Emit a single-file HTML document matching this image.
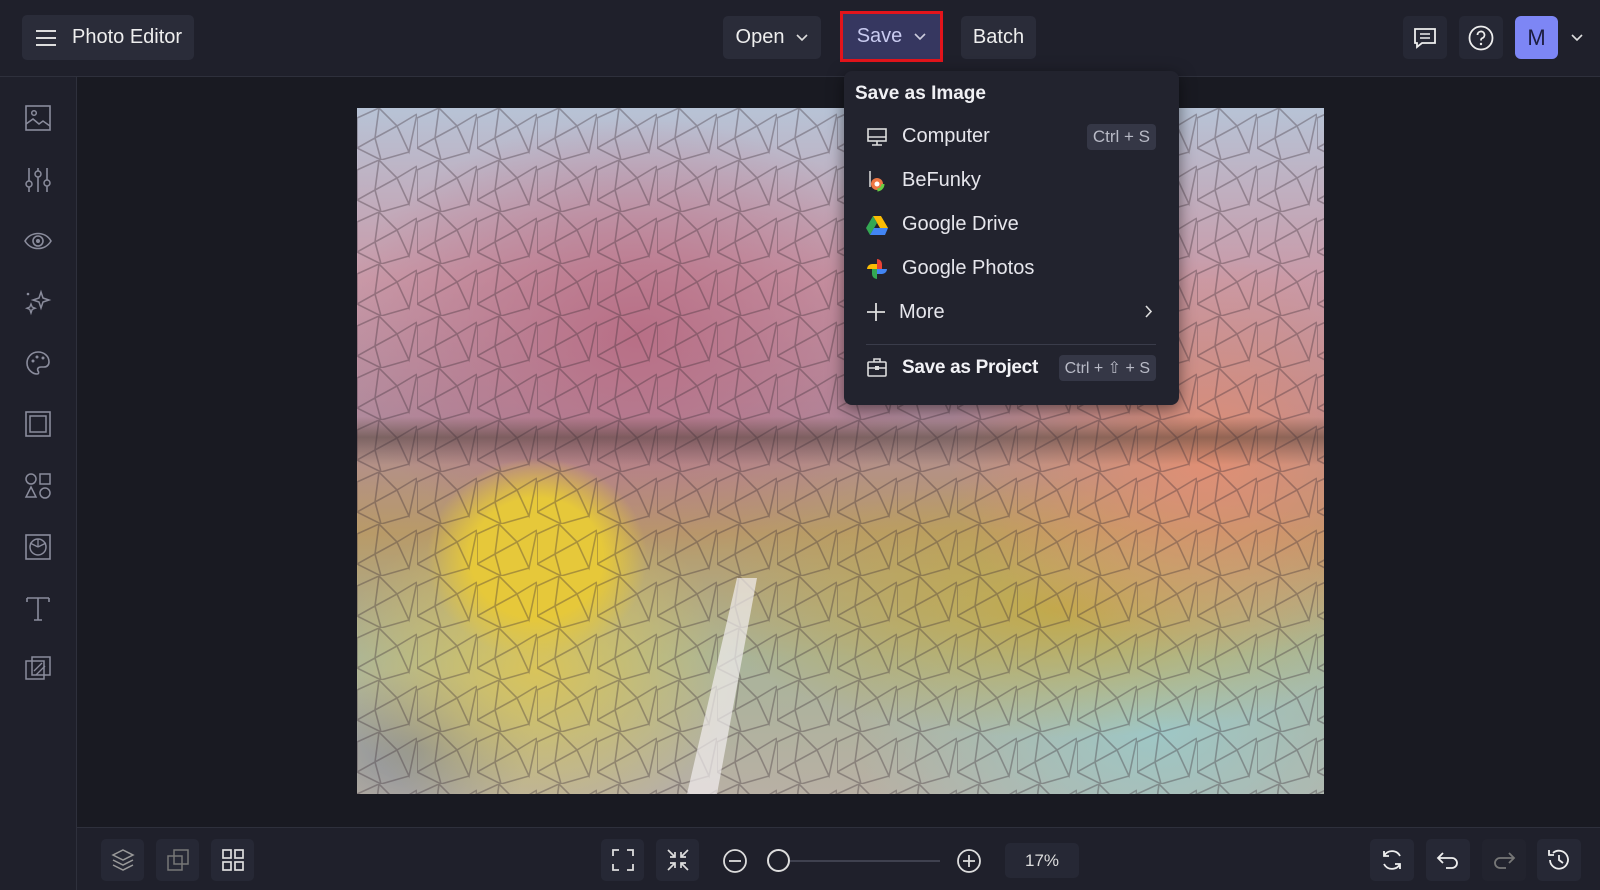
<!DOCTYPE html>
<html><head><meta charset="utf-8"><style>
*{box-sizing:border-box;margin:0;padding:0}
body{width:1600px;height:890px;background:#191a22;font-family:"Liberation Sans",sans-serif;color:#e8e8ee;position:relative;overflow:hidden}
.abs{position:absolute}
.hdr{left:0;top:0;width:1600px;height:77px;background:#1f202b;border-bottom:1px solid #2e303c}
.side{left:0;top:77px;width:77px;height:813px;background:#1f202b;border-right:1px solid #2e303c}
.bot{left:77px;top:827px;width:1523px;height:63px;background:#1f202b;border-top:1px solid #2e303c}
.btn{background:#2a2c39;border-radius:5px;display:flex;align-items:center;justify-content:center;font-size:20px;color:#eee}
.ib{background:#262835;border-radius:5px;width:42px;height:42px;display:flex;align-items:center;justify-content:center}
svg{display:block}
.menu{left:844px;top:71px;width:335px;height:334px;background:#22232e;border-radius:8px;box-shadow:0 4px 16px rgba(0,0,0,.5)}
.mi{position:absolute;left:58px;font-size:20px;color:#e6e6ec}
.kb{position:absolute;right:23px;background:#353746;color:#b8bac6;font-size:17px;padding:3px 6px;border-radius:4px}
.pic{left:357px;top:108px;width:967px;height:686px;background:
linear-gradient(180deg,rgba(0,0,0,0) 0%,rgba(0,0,0,0) 45%,rgba(60,50,40,.45) 48%,rgba(0,0,0,0) 52%),
radial-gradient(ellipse 110px 100px at 180px 450px,#e6c83a 0%,#e6c83a 60%,rgba(230,200,58,0) 100%),
radial-gradient(ellipse 200px 160px at 180px 560px,#d9c45a 0%,rgba(217,196,90,0) 100%),
radial-gradient(ellipse 300px 220px at 280px 230px,#b86f86 0%,rgba(184,111,134,0) 100%),
radial-gradient(ellipse 260px 200px at 850px 350px,#e08f74 0%,rgba(224,143,116,0) 100%),
radial-gradient(ellipse 350px 130px at 700px 500px,#c2a94a 0%,rgba(194,169,74,0) 100%),
radial-gradient(ellipse 300px 200px at 800px 620px,#9ec7c6 0%,rgba(158,199,198,0) 100%),
radial-gradient(ellipse 120px 80px at 60px 640px,#8a8e98 0%,rgba(138,142,152,0) 100%),
linear-gradient(180deg,#b7c3d6 0%,#c99aa8 25%,#b08a9c 45%,#b89a68 62%,#a9b49a 80%,#b8b0a4 100%);overflow:hidden}
</style></head><body>
<div class="abs hdr"></div>
<div class="abs side"></div>
<div class="abs bot"></div>

<div class="abs btn" style="left:22px;top:15px;width:172px;height:45px;justify-content:flex-start;padding-left:12px">
<svg width="24" height="20" viewBox="0 0 24 20"><path d="M2 3h20M2 10h20M2 17h20" stroke="#ddd" stroke-width="2"/></svg>
<span style="margin-left:14px">Photo Editor</span></div>
<div class="abs btn" style="left:723px;top:16px;width:98px;height:43px">Open<svg style="margin-left:12px" width="12" height="8"><path d="M1 1l5 5 5-5" stroke="#ddd" fill="none" stroke-width="1.6"/></svg></div>
<div class="abs" style="left:840px;top:11px;width:103px;height:51px;border:3px solid #e3141b;background:#363760;display:flex;align-items:center;justify-content:center;font-size:20px;color:#c9cbf0">Save<svg style="margin-left:12px" width="12" height="8"><path d="M1 1l5 5 5-5" stroke="#ccd" fill="none" stroke-width="1.6"/></svg></div>
<div class="abs btn" style="left:961px;top:16px;width:75px;height:43px">Batch</div>

<div class="abs ib" style="left:1403px;top:16px;width:44px;height:43px"><svg width="26" height="24"><path d="M3 3h20v14H10l-5 4v-4H3z" stroke="#eee" fill="none" stroke-width="1.8"/><path d="M8 8h10M8 12h10" stroke="#eee" stroke-width="1.6"/></svg></div>
<div class="abs ib" style="left:1459px;top:16px;width:44px;height:43px"><svg width="28" height="28"><circle cx="14" cy="14" r="11.5" stroke="#eee" fill="none" stroke-width="1.8"/><path d="M10.5 11a3.5 3.5 0 1 1 4.5 3.3c-1 .4-1 1-1 2.2" stroke="#eee" fill="none" stroke-width="1.8"/><circle cx="14" cy="20" r="1.2" fill="#eee"/></svg></div>
<div class="abs" style="left:1515px;top:16px;width:43px;height:43px;border-radius:6px;background:#7d86f5;color:#1c1d40;font-size:22px;display:flex;align-items:center;justify-content:center">M</div>
<svg class="abs" style="left:1571px;top:34px" width="12" height="8"><path d="M1 1l5 5 5-5" stroke="#ddd" fill="none" stroke-width="1.6"/></svg>

<svg class="abs" style="left:24px;top:104px" width="28" height="28"><rect x="2" y="2" width="24" height="24" stroke="#8a8c9c" fill="none" stroke-width="1.6"/><circle cx="10" cy="9" r="2.3" stroke="#8a8c9c" fill="none" stroke-width="1.5"/><path d="M2 20l7-5 6 5 4-3 7 5" stroke="#8a8c9c" fill="none" stroke-width="1.5"/></svg>
<svg class="abs" style="left:24px;top:166px" width="28" height="28"><path d="M5 2v24M14 2v24M23 2v24" stroke="#8a8c9c" stroke-width="1.6"/><circle cx="5" cy="18" r="3" fill="#1f202b" stroke="#8a8c9c" stroke-width="1.5"/><circle cx="14" cy="8" r="3" fill="#1f202b" stroke="#8a8c9c" stroke-width="1.5"/><circle cx="23" cy="17" r="3" fill="#1f202b" stroke="#8a8c9c" stroke-width="1.5"/></svg>
<svg class="abs" style="left:23px;top:227px" width="30" height="28"><path d="M2 14c6-10 20-10 26 0c-6 10-20 10-26 0z" stroke="#8a8c9c" fill="none" stroke-width="1.6"/><circle cx="15" cy="14" r="5" stroke="#8a8c9c" fill="none" stroke-width="1.6"/><circle cx="15" cy="14" r="2" fill="#8a8c9c"/></svg>
<svg class="abs" style="left:24px;top:288px" width="28" height="28"><path d="M17 4l2 6 6 2-6 2-2 6-2-6-6-2 6-2z" stroke="#8a8c9c" fill="none" stroke-width="1.5"/><path d="M7 16l1.2 3 3 1.2-3 1.2L7 25l-1.2-3.6-3-1.2 3-1.2z" stroke="#8a8c9c" fill="none" stroke-width="1.4"/><circle cx="4" cy="6" r="1.3" fill="#8a8c9c"/></svg>
<svg class="abs" style="left:24px;top:349px" width="28" height="28"><path d="M14 3C7 3 3 9 3 14c0 7 6 11 10 11 2 0 2-2 1-3-1-2 0-4 3-4h3c3 0 5-2 5-5 0-6-5-10-11-10z" stroke="#8a8c9c" fill="none" stroke-width="1.6"/><circle cx="9" cy="12" r="1.5" fill="#8a8c9c"/><circle cx="13" cy="8" r="1.5" fill="#8a8c9c"/><circle cx="19" cy="9" r="1.5" fill="#8a8c9c"/></svg>
<svg class="abs" style="left:24px;top:410px" width="28" height="28"><rect x="2" y="2" width="24" height="24" stroke="#8a8c9c" fill="none" stroke-width="1.6"/><rect x="6" y="6" width="16" height="16" stroke="#8a8c9c" fill="none" stroke-width="1.5"/></svg>
<svg class="abs" style="left:24px;top:472px" width="28" height="28"><circle cx="7" cy="7" r="5" stroke="#8a8c9c" fill="none" stroke-width="1.5"/><rect x="16" y="2" width="10" height="10" stroke="#8a8c9c" fill="none" stroke-width="1.5"/><path d="M7 15l5 10H2z" stroke="#8a8c9c" fill="none" stroke-width="1.5"/><circle cx="21" cy="21" r="5" stroke="#8a8c9c" fill="none" stroke-width="1.5"/></svg>
<svg class="abs" style="left:24px;top:533px" width="28" height="28"><rect x="2" y="2" width="24" height="24" stroke="#8a8c9c" fill="none" stroke-width="1.6"/><circle cx="14" cy="14" r="8" stroke="#8a8c9c" fill="none" stroke-width="1.5"/><path d="M6 10l8 4M14 6v8M22 10l-8 4" stroke="#8a8c9c" stroke-width="1.3"/></svg>
<svg class="abs" style="left:24px;top:594px" width="28" height="28"><path d="M3 4h22M14 4v22M3 4v4M25 4v4M10 26h8" stroke="#8a8c9c" fill="none" stroke-width="1.6"/></svg>
<svg class="abs" style="left:24px;top:655px" width="28" height="28"><rect x="2" y="6" width="18" height="18" stroke="#8a8c9c" fill="none" stroke-width="1.5"/><rect x="8" y="2" width="18" height="18" stroke="#8a8c9c" fill="none" stroke-width="1.5"/><path d="M10 16l8-8M12 20l9-9" stroke="#8a8c9c" stroke-width="1.3"/></svg>

<div class="abs pic">
<svg width="967" height="686" style="position:absolute;left:0;top:0">
<defs><pattern id="m" width="60" height="52" patternUnits="userSpaceOnUse">
<path d="M0 10L22 0L40 18L60 6M22 0L18 30L40 18L52 44L60 6M18 30L0 40L24 52L52 44M18 30L24 52M0 10L0 40" stroke="#3c2f35" stroke-opacity=".35" stroke-width="1.6" fill="none"/></pattern></defs>
<rect width="967" height="686" fill="url(#m)"/>
<path d="M330 686L380 470L400 470L360 686z" fill="#f2eef0" opacity=".7"/>
</svg></div>

<div class="abs menu">
<div style="position:absolute;left:11px;top:12px;font-size:19px;font-weight:bold;color:#f0f0f4">Save as Image</div>
<svg class="abs" style="left:22px;top:56px" width="22" height="20"><rect x="2" y="2" width="18" height="12" stroke="#ddd" fill="none" stroke-width="1.6"/><path d="M2 10h18M11 14v4M6 18h10" stroke="#ddd" stroke-width="1.6"/></svg>
<div class="mi" style="top:54px">Computer</div><div class="kb" style="top:53px">Ctrl + S</div>
<svg class="abs" style="left:22px;top:98px" width="22" height="24"><path d="M4 2v16" stroke="#ddd" stroke-width="1.5"/><circle cx="11" cy="15" r="6" fill="#e74"/><circle cx="11" cy="15" r="6" fill="none" stroke="#6c4" stroke-width="3" stroke-dasharray="9 30"/><circle cx="11" cy="15" r="2.5" fill="#fff"/></svg>
<div class="mi" style="top:98px">BeFunky</div>
<svg class="abs" style="left:21px;top:143px" width="24" height="22"><path d="M8 2h8l7 12h-8z" fill="#fbbc04"/><path d="M8 2L1 14l4 7 7-12z" fill="#34a853"/><path d="M5 21h15l3-7H9z" fill="#4285f4"/></svg>
<div class="mi" style="top:142px">Google Drive</div>
<svg class="abs" style="left:21px;top:186px" width="24" height="24"><path d="M12 12V2a5 5 0 0 1 5 5v5z" fill="#ea4335"/><path d="M12 12h10a5 5 0 0 1-5 5h-5z" fill="#4285f4"/><path d="M12 12v10a5 5 0 0 1-5-5v-5z" fill="#34a853"/><path d="M12 12H2a5 5 0 0 1 5-5h5z" fill="#fbbc04"/></svg>
<div class="mi" style="top:186px">Google Photos</div>
<svg class="abs" style="left:22px;top:231px" width="20" height="20"><path d="M10 1v18M1 10h18" stroke="#ddd" stroke-width="1.8"/></svg>
<div class="mi" style="top:230px;left:55px">More</div>
<svg class="abs" style="left:301px;top:234px" width="8" height="13"><path d="M1 1l5 5.5L1 12" stroke="#ddd" fill="none" stroke-width="1.6"/></svg>
<div class="abs" style="left:22px;top:273px;width:290px;height:1px;background:#3a3c4a"></div>
<svg class="abs" style="left:22px;top:285px" width="22" height="22"><rect x="2" y="6" width="18" height="14" rx="1" stroke="#ddd" fill="none" stroke-width="1.6"/><path d="M8 6V3h6v3M2 12h18" stroke="#ddd" fill="none" stroke-width="1.6"/><rect x="9" y="10" width="4" height="4" fill="#ddd"/></svg>
<div class="mi" style="top:286px;font-weight:bold;color:#f2f2f6;font-size:19px;letter-spacing:-.3px">Save as Project</div><div class="kb" style="top:284px;font-size:16px">Ctrl + ⇧ + S</div>
</div>

<div class="abs ib" style="left:101px;top:839px;width:43px"><svg width="26" height="26"><path d="M13 3l10 5-10 5-10-5z" stroke="#999" fill="none" stroke-width="1.5"/><path d="M3 13l10 5 10-5M3 18l10 5 10-5" stroke="#999" fill="none" stroke-width="1.5"/></svg></div>
<div class="abs ib" style="left:156px;top:839px;width:43px"><svg width="26" height="26"><rect x="3" y="9" width="14" height="14" stroke="#777" fill="none" stroke-width="1.5"/><rect x="9" y="3" width="14" height="14" stroke="#777" fill="none" stroke-width="1.5"/></svg></div>
<div class="abs ib" style="left:211px;top:839px;width:43px"><svg width="24" height="24"><rect x="2" y="2" width="8" height="8" stroke="#ddd" fill="none" stroke-width="1.7"/><rect x="14" y="2" width="8" height="8" stroke="#ddd" fill="none" stroke-width="1.7"/><rect x="2" y="14" width="8" height="8" stroke="#ddd" fill="none" stroke-width="1.7"/><rect x="14" y="14" width="8" height="8" stroke="#ddd" fill="none" stroke-width="1.7"/></svg></div>
<div class="abs ib" style="left:601px;top:839px;width:43px"><svg width="24" height="24"><path d="M2 8V2h6M16 2h6v6M22 16v6h-6M8 22H2v-6" stroke="#ddd" fill="none" stroke-width="1.8"/></svg></div>
<div class="abs ib" style="left:656px;top:839px;width:43px"><svg width="24" height="24"><path d="M2 2l7 7M9 4v5H4M22 2l-7 7M15 4v5h5M2 22l7-7M4 15h5v5M22 22l-7-7M20 15h-5v5" stroke="#ddd" fill="none" stroke-width="1.7"/></svg></div>
<svg class="abs" style="left:722px;top:848px" width="26" height="26"><circle cx="13" cy="13" r="11" stroke="#ddd" fill="none" stroke-width="1.8"/><path d="M7 13h12" stroke="#ddd" stroke-width="1.8"/></svg>
<div class="abs" style="left:778px;top:860px;width:162px;height:2px;background:#3f414f"></div>
<div class="abs" style="left:767px;top:849px;width:23px;height:23px;border-radius:50%;border:2px solid #ddd;background:#1f202b"></div>
<svg class="abs" style="left:956px;top:848px" width="26" height="26"><circle cx="13" cy="13" r="11" stroke="#ddd" fill="none" stroke-width="1.8"/><path d="M7 13h12M13 7v12" stroke="#ddd" stroke-width="1.8"/></svg>
<div class="abs ib" style="left:1005px;top:843px;width:74px;height:35px;font-size:17px;color:#ddd">17%</div>
<div class="abs ib" style="left:1370px;top:839px;width:44px"><svg width="26" height="26"><path d="M21 9A9 9 0 0 0 5 9M5 4v5h5M5 17a9 9 0 0 0 16 0M21 22v-5h-5" stroke="#eee" fill="none" stroke-width="1.8"/></svg></div>
<div class="abs ib" style="left:1426px;top:839px;width:44px"><svg width="26" height="26"><path d="M8 6L3 11l5 5M3 11h14a5 5 0 0 1 0 10h-6" stroke="#eee" fill="none" stroke-width="1.8"/></svg></div>
<div class="abs ib" style="left:1482px;top:839px;width:44px;background:#22232e"><svg width="26" height="26"><path d="M18 6l5 5-5 5M23 11H9a5 5 0 0 0 0 10h6" stroke="#777" fill="none" stroke-width="1.8"/></svg></div>
<div class="abs ib" style="left:1537px;top:839px;width:44px"><svg width="26" height="26"><path d="M4 13a9 9 0 1 0 3-7M3 3v5h5M13 8v5l4 3" stroke="#eee" fill="none" stroke-width="1.8"/></svg></div>
</body></html>
